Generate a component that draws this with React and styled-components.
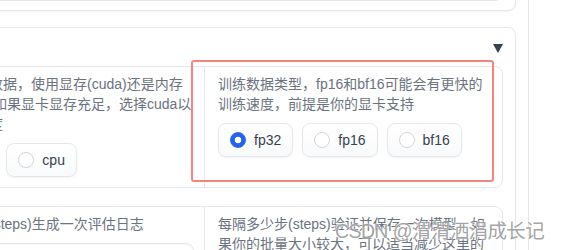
import React from "react";
import styled, { createGlobalStyle } from "styled-components";

const GlobalStyle = createGlobalStyle`
  html, body {
    margin: 0;
    padding: 0;
    background: #fff;
  }
  body {
    font-family: "Liberation Sans", "Noto Sans CJK SC", sans-serif;
    overflow: hidden;
  }
`;

const Viewport = styled.div`
  position: relative;
  width: 561px;
  height: 250px;
  overflow: hidden;
  background: #fff;
`;

/* the page is wider than the shot, so the column starts off to the left */
const Panel = styled.div`
  display: flex;
  flex-direction: column;
  gap: 16px;
  width: 650px;
  min-height: 420px;
  box-sizing: border-box;
  margin: -60px 0 0 -121px;
  padding: 0 12px;
  border-left: 1px solid #e5e7eb;
  border-right: 1px solid #e5e7eb;
`;

const Block = styled.div`
  border: 1px solid #e5e7eb;
  border-radius: 8px;
  background: #fff;
  box-shadow: 0 1px 2px rgba(0, 0, 0, 0.05);
  padding: ${(p) => p.$pad || "12px"};
`;

const AccordionHeader = styled.div`
  display: flex;
  align-items: center;
  justify-content: space-between;
  height: 16px;
  margin-bottom: 10px;
  font-size: 14px;
  color: #374151;
`;

const Stack = styled.div`
  display: flex;
  flex-direction: column;
  gap: 18px;
`;

const Form = styled.div`
  display: grid;
  grid-template-columns: 298px 1fr;
  gap: 1px;
  background: #e5e7eb;
  border: 1px solid #e5e7eb;
  border-radius: 8px;
  overflow: hidden;
  min-height: ${(p) => p.$minHeight || "0"};
`;

const Cell = styled.div`
  background: #fff;
  padding: 7px ${(p) => p.$padRight || "13px"} 10px 13px;
`;

const Info = styled.p`
  margin: 0;
  font-size: 14px;
  line-height: 20px;
  color: #6b7280;
`;

const Options = styled.div`
  display: flex;
  flex-wrap: wrap;
  gap: 9px;
  margin-top: 9px;
`;

const Option = styled.label`
  display: flex;
  align-items: center;
  gap: 8px;
  height: 34px;
  box-sizing: border-box;
  padding: 0 11px;
  border: 1px solid #e5e7eb;
  border-radius: 8px;
  background: linear-gradient(to top, #f9fafb, #fff);
  box-shadow: 0 1px 2px rgba(0, 0, 0, 0.05);
  font-size: 14px;
  color: #374151;
`;

const Dot = styled.span`
  width: 16px;
  height: 16px;
  box-sizing: border-box;
  border-radius: 50%;
  border: 1px solid ${(p) => (p.$checked ? "#2563eb" : "#d1d5db")};
  background: ${(p) =>
    p.$checked
      ? "radial-gradient(circle, #fff 0 3px, #2563eb 3.6px)"
      : "#fff"};
`;

const NumberBox = styled.input`
  display: block;
  width: 100%;
  height: 40px;
  margin-top: 9px;
  box-sizing: border-box;
  border: 1px solid #e5e7eb;
  border-radius: 8px;
  background: #fff;
  box-shadow: inset 0 1px 2px rgba(0, 0, 0, 0.04);
`;

const Highlight = styled.div`
  position: absolute;
  left: 191px;
  top: 60px;
  width: 303px;
  height: 122px;
  box-sizing: border-box;
  border: 2px solid #f2857f;
  border-radius: 3px;
  pointer-events: none;
`;

const Watermark = styled.div`
  position: absolute;
  left: 335px;
  top: 221px;
  font-size: 19.5px;
  line-height: 20px;
  letter-spacing: -0.6px;
  color: rgba(110, 110, 110, 0.65);
  text-shadow: 0 0 2px #fff, 0 0 1px #fff;
  white-space: nowrap;
  pointer-events: none;
`;

const Caret = () => (
  <svg width="10" height="9" viewBox="0 0 10 9">
    <polygon points="0,0 10,0 5,9" fill="#374151" />
  </svg>
);

const Radio = ({ label, checked }) => (
  <Option>
    <Dot $checked={checked} />
    {label}
  </Option>
);

export default function App() {
  return (
    <>
      <GlobalStyle />
      <Viewport>
        <Panel>
          <Block $pad="12px 12px 9px">
            <Form $minHeight="46px">
              <Cell />
              <Cell />
            </Form>
          </Block>

          <Block>
            <AccordionHeader>
              <span>高级设置</span>
              <Caret />
            </AccordionHeader>
            <Stack>
              <Form>
                <Cell $padRight="10px">
                  <Info>
                    训练时加载数据，使用显存(cuda)还是内存(cpu)，一般如果显卡显存充足，选择cuda以加快训练速度
                  </Info>
                  <Options>
                    <Radio label="cuda" checked />
                    <Radio label="cpu" />
                  </Options>
                </Cell>
                <Cell>
                  <Info>
                    训练数据类型，fp16和bf16可能会有更快的训练速度，前提是你的显卡支持
                  </Info>
                  <Options>
                    <Radio label="fp32" checked />
                    <Radio label="fp16" />
                    <Radio label="bf16" />
                  </Options>
                </Cell>
              </Form>
              <Form>
                <Cell $padRight="10px">
                  <Info>每隔多少步(steps)生成一次评估日志</Info>
                  <NumberBox type="number" defaultValue="" />
                </Cell>
                <Cell>
                  <Info>
                    每隔多少步(steps)验证并保存一次模型，如果你的批量大小较大，可以适当减少这里的值
                  </Info>
                  <NumberBox type="number" defaultValue="" />
                </Cell>
              </Form>
            </Stack>
          </Block>
        </Panel>
        <Highlight />
        <Watermark>CSDN @渭渭洒涓成长记</Watermark>
      </Viewport>
    </>
  );
}
